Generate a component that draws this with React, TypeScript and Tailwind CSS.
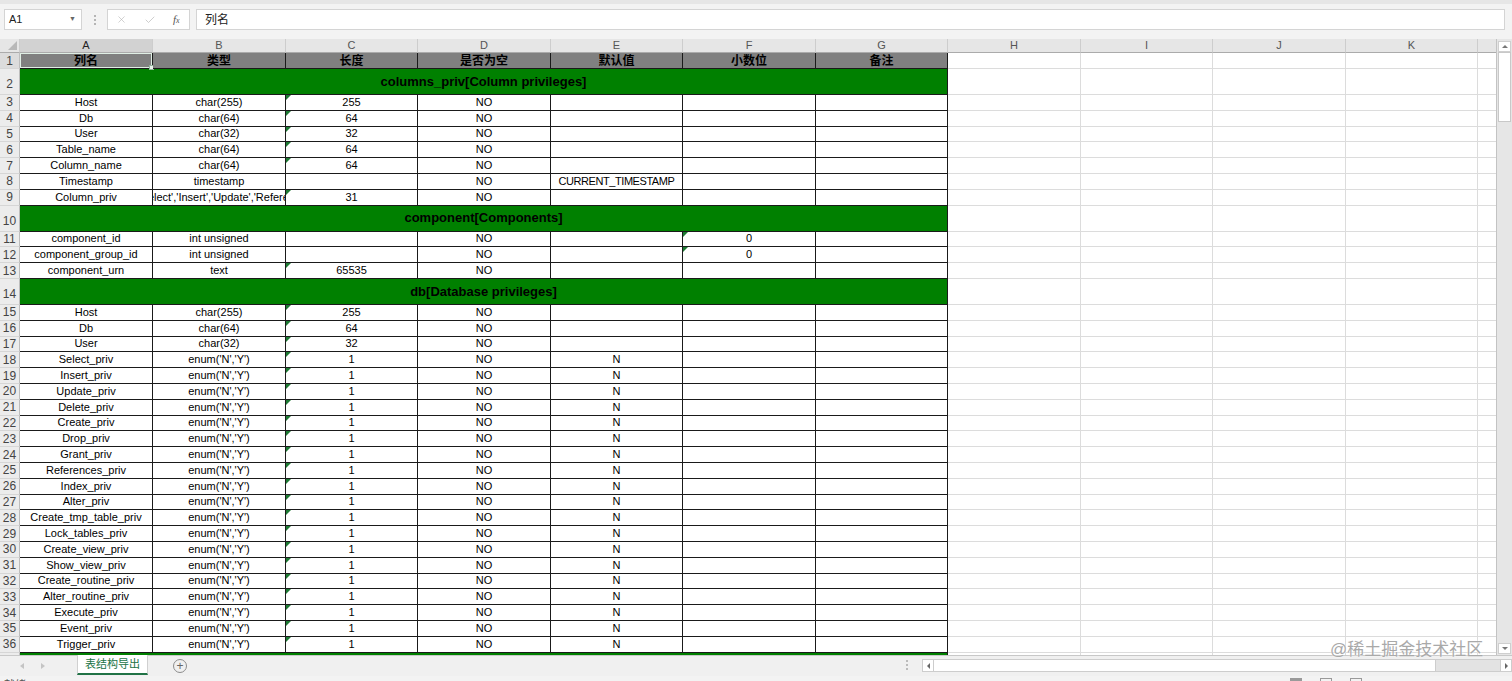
import { X, Check } from 'lucide-react';

// Excel-like view of an exported table structure sheet

const FONT = "font-['Liberation_Sans','Noto_Sans_CJK_SC',sans-serif]";

// widths of columns A..K, written out so Tailwind sees them
const COLS = [
  { letter: 'A', w: 'w-[133px]' },
  { letter: 'B', w: 'w-[133px]' },
  { letter: 'C', w: 'w-[132px]' },
  { letter: 'D', w: 'w-[133px]' },
  { letter: 'E', w: 'w-[132px]' },
  { letter: 'F', w: 'w-[133px]' },
  { letter: 'G', w: 'w-[132px]' },
  { letter: 'H', w: 'w-[133px]' },
  { letter: 'I', w: 'w-[132px]' },
  { letter: 'J', w: 'w-[133px]' },
  { letter: 'K', w: 'w-[132px]' },
];

const HEADERS = ['列名', '类型', '长度', '是否为空', '默认值', '小数位', '备注'];

type Row =
  | { kind: 'head' }
  | { kind: 'section'; title: string }
  | { kind: 'data'; cells: string[] };

const PRIVS = [
  'Select_priv',
  'Insert_priv',
  'Update_priv',
  'Delete_priv',
  'Create_priv',
  'Drop_priv',
  'Grant_priv',
  'References_priv',
  'Index_priv',
  'Alter_priv',
  'Create_tmp_table_priv',
  'Lock_tables_priv',
  'Create_view_priv',
  'Show_view_priv',
  'Create_routine_priv',
  'Alter_routine_priv',
  'Execute_priv',
  'Event_priv',
  'Trigger_priv',
];

const ROWS: Row[] = [
  { kind: 'head' },
  { kind: 'section', title: 'columns_priv[Column privileges]' },
  { kind: 'data', cells: ['Host', 'char(255)', '255', 'NO', '', '', ''] },
  { kind: 'data', cells: ['Db', 'char(64)', '64', 'NO', '', '', ''] },
  { kind: 'data', cells: ['User', 'char(32)', '32', 'NO', '', '', ''] },
  { kind: 'data', cells: ['Table_name', 'char(64)', '64', 'NO', '', '', ''] },
  { kind: 'data', cells: ['Column_name', 'char(64)', '64', 'NO', '', '', ''] },
  { kind: 'data', cells: ['Timestamp', 'timestamp', '', 'NO', 'CURRENT_TIMESTAMP', '', ''] },
  {
    kind: 'data',
    cells: ['Column_priv', "set('Select','Insert','Update','References')", '31', 'NO', '', '', ''],
  },
  { kind: 'section', title: 'component[Components]' },
  { kind: 'data', cells: ['component_id', 'int unsigned', '', 'NO', '', '0', ''] },
  { kind: 'data', cells: ['component_group_id', 'int unsigned', '', 'NO', '', '0', ''] },
  { kind: 'data', cells: ['component_urn', 'text', '65535', 'NO', '', '', ''] },
  { kind: 'section', title: 'db[Database privileges]' },
  { kind: 'data', cells: ['Host', 'char(255)', '255', 'NO', '', '', ''] },
  { kind: 'data', cells: ['Db', 'char(64)', '64', 'NO', '', '', ''] },
  { kind: 'data', cells: ['User', 'char(32)', '32', 'NO', '', '', ''] },
  ...PRIVS.map((p): Row => ({ kind: 'data', cells: [p, "enum('N','Y')", '1', 'NO', 'N', '', ''] })),
  { kind: 'section', title: '' },
];

function GreenMark() {
  return (
    <div className="absolute left-0 top-0 w-0 h-0 border-t-[5px] border-r-[5px] border-t-[#1d7a33] border-r-transparent" />
  );
}

function RowHeader({ n, bottom, active }: { n: number; bottom?: boolean; active?: boolean }) {
  return (
    <div
      className={`w-[20px] shrink-0 flex justify-center border-r border-b border-r-[#bdbdbd] border-b-[#d6d6d6] text-[12px] text-[#444] ${
        bottom ? 'items-end pb-[1px]' : 'items-center'
      } ${active ? 'bg-[#dcdcdc]' : 'bg-[#ececec]'}`}
    >
      {n}
    </div>
  );
}

function EmptyCells() {
  return (
    <>
      {COLS.slice(7).map((c) => (
        <div key={c.letter} className={`${c.w} shrink-0 border-r border-b border-[#dcdcdc] bg-white`} />
      ))}
      <div className="flex-1 border-b border-[#dcdcdc] bg-white" />
    </>
  );
}

function SheetRow({ row, n }: { row: Row; n: number }) {
  if (row.kind === 'head') {
    return (
      <div className="flex h-[16px] shrink-0">
        <RowHeader n={n} active />
        {HEADERS.map((h, i) => (
          <div
            key={h}
            className={`${COLS[i].w} shrink-0 relative flex items-center justify-center bg-[#808080] border-r border-b border-[#1a1a1a] text-[12px] font-bold text-black leading-none`}
          >
            {h}
            {i === 0 && (
              <div className="absolute inset-0 border border-[#dfeee4]">
                <div className="absolute -right-[3px] -bottom-[3px] w-[5px] h-[5px] bg-[#e9f2ec] border border-[#8fb39b]" />
              </div>
            )}
          </div>
        ))}
        <EmptyCells />
      </div>
    );
  }

  if (row.kind === 'section') {
    return (
      <div className="flex h-[26px] shrink-0">
        <RowHeader n={n} bottom />
        <div className="w-[928px] shrink-0 flex items-center justify-center bg-[#008000] border-r border-b border-[#1a1a1a] text-[13px] font-bold text-black">
          {row.title}
        </div>
        <EmptyCells />
      </div>
    );
  }

  return (
    <div className="flex h-[15.8px] shrink-0">
      <RowHeader n={n} />
      {row.cells.map((v, i) => (
        <div
          key={i}
          className={`${COLS[i].w} shrink-0 relative flex items-center justify-center overflow-hidden whitespace-nowrap bg-white border-r border-b border-[#1a1a1a] text-[11px] text-black leading-none ${
            v === 'CURRENT_TIMESTAMP' ? 'tracking-[-0.04em] text-[10px]' : ''
          }`}
        >
          <span className="shrink-0">{v}</span>
          {(i === 2 || i === 5) && v !== '' && <GreenMark />}
        </div>
      ))}
      <EmptyCells />
    </div>
  );
}

function FormulaBar() {
  return (
    <div className="h-[39px] bg-[#f3f3f3] flex flex-col">
      <div className="h-[4px] bg-[#e6e6e6]" />
      <div className="flex items-start mt-[5px]">
        {/* name box */}
        <div className="ml-[4px] w-[78px] h-[21px] bg-white border border-[#d4d4d4] flex items-center justify-between pl-[4px] pr-[5px] text-[11px] text-[#222]">
          <span>A1</span>
          <span className="text-[7px] text-[#666]">▼</span>
        </div>
        <div className="w-[25px] h-[21px] flex flex-col items-center justify-center gap-[2px]">
          <span className="w-[2px] h-[2px] bg-[#b5b5b5]" />
          <span className="w-[2px] h-[2px] bg-[#b5b5b5]" />
          <span className="w-[2px] h-[2px] bg-[#b5b5b5]" />
        </div>
        <div className="w-[83px] h-[21px] bg-white border border-[#d4d4d4] flex items-center pl-[8px] gap-[17px]">
          <X size={11} strokeWidth={1.3} color="#b3b3b3" />
          <Check size={12} strokeWidth={1.3} color="#b3b3b3" />
          <span className="font-['Liberation_Serif',serif] italic text-[11px] text-[#555] leading-none">
            f<span className="text-[8px]">x</span>
          </span>
        </div>
        <div className="ml-[6px] w-[1309px] h-[21px] bg-white border border-[#d4d4d4] flex items-center pl-[8px] text-[12px] text-[#222]">
          列名
        </div>
      </div>
    </div>
  );
}

function ColumnHeaders() {
  return (
    <div className="flex h-[14px] bg-[#e6e6e6] shrink-0">
      <div className="w-[20px] shrink-0 relative border-r border-b border-r-[#cdcdcd] border-b-[#ababab]">
        <div className="absolute right-[2px] bottom-[2px] w-0 h-0 border-b-[9px] border-l-[9px] border-l-transparent border-b-[#b8b8b8]" />
      </div>
      {COLS.map((c) => (
        <div
          key={c.letter}
          className={`${c.w} shrink-0 flex items-center justify-center border-r border-b border-r-[#cdcdcd] border-b-[#ababab] text-[11px] leading-none ${
            c.letter === 'A' ? 'bg-[#d2d2d2] text-[#222]' : 'text-[#555]'
          }`}
        >
          {c.letter}
        </div>
      ))}
      <div className="flex-1 border-b border-[#ababab]" />
    </div>
  );
}

function VScroll() {
  return (
    <div className="w-[16px] shrink-0 bg-[#e6e6e6] border-l border-[#c3c3c3] flex flex-col items-center pt-[2px] pb-[1px]">
      <div className="w-[13px] h-[11px] bg-white border border-[#cfcfcf] flex items-center justify-center">
        <div className="w-0 h-0 border-l-[3px] border-r-[3px] border-b-[3px] border-l-transparent border-r-transparent border-b-[#777]" />
      </div>
      <div className="w-[13px] h-[70px] bg-white border border-[#c8c8c8]" />
      <div className="flex-1" />
      <div className="w-[13px] h-[11px] bg-white border border-[#cfcfcf] flex items-center justify-center">
        <div className="w-0 h-0 border-l-[3px] border-r-[3px] border-t-[3px] border-l-transparent border-r-transparent border-t-[#777]" />
      </div>
    </div>
  );
}

function TabBar() {
  return (
    <div className="h-[21px] bg-[#f0f0f0] border-t border-[#c8c8c8] flex items-start">
      {/* sheet navigation arrows */}
      <div className="w-[77px] h-[19px] flex items-center">
        <div className="ml-[20px] w-0 h-0 border-t-[3px] border-b-[3px] border-r-[4px] border-t-transparent border-b-transparent border-r-[#c4c4c4]" />
        <div className="ml-[17px] w-0 h-0 border-t-[3px] border-b-[3px] border-l-[4px] border-t-transparent border-b-transparent border-l-[#c4c4c4]" />
      </div>
      <div className="w-[71px] h-[20px] -mt-[1px] bg-white border-x border-[#d0d0d0] border-b-2 border-b-[#217346] flex items-center justify-center text-[11px] text-[#217346]">
        表结构导出
      </div>
      <div className="ml-[25px] mt-[3px] w-[14px] h-[14px] rounded-full border border-[#8c8c8c] flex items-center justify-center text-[12px] leading-none text-[#666]">
        +
      </div>
      <div className="flex-1" />
      <div className="mt-[4px] mr-[14px] flex flex-col gap-[2px]">
        <span className="w-[2px] h-[2px] bg-[#bbb]" />
        <span className="w-[2px] h-[2px] bg-[#bbb]" />
        <span className="w-[2px] h-[2px] bg-[#bbb]" />
      </div>
      {/* horizontal scrollbar */}
      <div className="mt-[3px] w-[590px] h-[13px] bg-[#e3e3e3] border border-[#cdcdcd] flex items-stretch">
        <div className="w-[11px] bg-white border-r border-[#cdcdcd] flex items-center justify-center">
          <div className="w-0 h-0 border-t-[3px] border-b-[3px] border-r-[3px] border-t-transparent border-b-transparent border-r-[#666]" />
        </div>
        <div className="w-[502px] bg-white border-r border-[#cdcdcd]" />
        <div className="flex-1" />
        <div className="w-[11px] bg-white border-l border-[#cdcdcd] flex items-center justify-center">
          <div className="w-0 h-0 border-t-[3px] border-b-[3px] border-l-[3px] border-t-transparent border-b-transparent border-l-[#666]" />
        </div>
      </div>
    </div>
  );
}

export default function App() {
  return (
    <div className={`${FONT} relative w-[1512px] h-[681px] overflow-hidden bg-[#f3f3f3]`}>
      <FormulaBar />

      <div className="flex h-[616px]">
        <div className="flex-1 flex flex-col overflow-hidden bg-white">
          <ColumnHeaders />
          {ROWS.map((r, i) => (
            <SheetRow key={i} row={r} n={i + 1} />
          ))}
        </div>
        <VScroll />
      </div>

      <TabBar />

      {/* status bar, mostly cut off */}
      <div className="h-[5px] bg-[#f3f3f3] overflow-hidden flex items-start text-[11px] text-[#555]">
        <span className="ml-[4px] mt-[1px]">就绪</span>
        <div className="flex-1" />
        <div className="mr-[150px] mt-[2px] flex gap-[18px]">
          <span className="w-[12px] h-[8px] bg-[#9a9a9a]" />
          <span className="w-[12px] h-[8px] border border-[#9a9a9a]" />
          <span className="w-[12px] h-[8px] border border-[#9a9a9a]" />
        </div>
      </div>

      {/* watermark */}
      <div className="absolute left-[1330px] top-[641px] text-[17px] leading-none text-[#a9a9a9] [text-shadow:0_0_2px_#fff] pointer-events-none">
        @稀土掘金技术社区
      </div>
    </div>
  );
}
